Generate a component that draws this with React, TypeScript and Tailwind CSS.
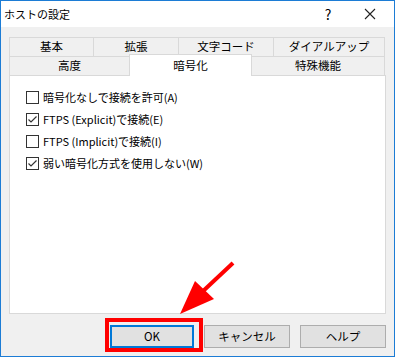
const FONT = { fontFamily: '"Noto Sans CJK JP", "Liberation Sans", sans-serif' };

const row1 = [
  { label: "基本", w: "w-[85px]" },
  { label: "拡張", w: "w-[85px]" },
  { label: "文字コード", w: "w-[95px]" },
  { label: "ダイアルアップ", w: "w-[111px]" },
];

const options = [
  { label: "暗号化なしで接続を許可(A)", checked: false },
  { label: "FTPS (Explicit)で接続(E)", checked: true },
  { label: "FTPS (Implicit)で接続(I)", checked: false },
  { label: "弱い暗号化方式を使用しない(W)", checked: true },
];

function Check({ checked }: { checked: boolean }) {
  return (
    <span className="w-[13px] h-[13px] border border-[#333] bg-white flex items-center justify-center shrink-0">
      {checked && (
        <svg width="11" height="11" viewBox="0 0 11 11">
          <path d="M1.5 5.5 L4 8 L9.5 2.5" fill="none" stroke="#333" strokeWidth="1.2" />
        </svg>
      )}
    </span>
  );
}

export default function App() {
  return (
    <div
      className="relative w-[395px] h-[357px] flex flex-col border border-[#1c7cd5] bg-[#f0f0f0] text-[11.5px] text-black overflow-hidden"
      style={FONT}
    >
      {/* タイトルバー */}
      <div className="h-[26px] bg-white flex items-center pl-[3px] shrink-0">
        <span className="flex-1 text-[11px]">ホストの設定</span>
        <span className="w-[20px] text-center text-[14px] mr-[26px]">?</span>
        <svg width="12" height="12" viewBox="0 0 12 12" className="mr-[18px]">
          <path d="M1 1 L11 11 M11 1 L1 11" stroke="#222" strokeWidth="1.1" />
        </svg>
      </div>

      {/* 本体 */}
      <div className="flex-1 flex flex-col px-[8px] pt-[10px]">
        <div className="flex h-[19px]">
          {row1.map((t, i) => (
            <div
              key={t.label}
              className={`${t.w} border-t border-r border-[#d9d9d9] ${i === 0 ? "border-l" : ""} flex items-center justify-center leading-none`}
            >
              {t.label}
            </div>
          ))}
        </div>
        <div className="flex h-[19px]">
          <div className="w-[120px] border-t border-l border-[#d9d9d9] flex items-center justify-center leading-none">
            高度
          </div>
          <div className="relative z-10 -mt-[2px] h-[22px] w-[123px] bg-white border-t border-l border-r border-[#d9d9d9] flex items-center justify-center leading-none">
            暗号化
          </div>
          <div className="w-[133px] border-t border-r border-[#d9d9d9] flex items-center justify-center leading-none">
            特殊機能
          </div>
        </div>

        <div className="h-[239px] w-[377px] bg-white border border-[#d9d9d9] flex flex-col gap-[6px] pl-[16px] pt-[13px] text-[11px]">
          {options.map((o) => (
            <label key={o.label} className="flex items-center gap-[4px] h-[16px] leading-none">
              <Check checked={o.checked} />
              <span>{o.label}</span>
            </label>
          ))}
        </div>

        <div className="flex gap-[10px] justify-end mt-[11px]">
          <button className="w-[84px] h-[23px] bg-[#e1e1e1] border-2 border-[#0078d7] leading-none">OK</button>
          <button className="w-[86px] h-[23px] bg-[#e1e1e1] border border-[#adadad] leading-none">キャンセル</button>
          <button className="w-[86px] h-[23px] bg-[#e1e1e1] border border-[#adadad] leading-none">ヘルプ</button>
        </div>
      </div>

      {/* 注釈: 赤枠と矢印 */}
      <div className="absolute left-[104px] top-[317px] w-[98px] h-[34px] border-[4px] border-[#ff0000]" />
      <svg className="absolute left-0 top-0" width="395" height="357" viewBox="0 0 395 357">
        <line x1="232" y1="262" x2="200" y2="292" stroke="#ff0000" strokeWidth="4" />
        <polygon points="179,313 194,280 213,298" fill="#ff0000" />
      </svg>
    </div>
  );
}
